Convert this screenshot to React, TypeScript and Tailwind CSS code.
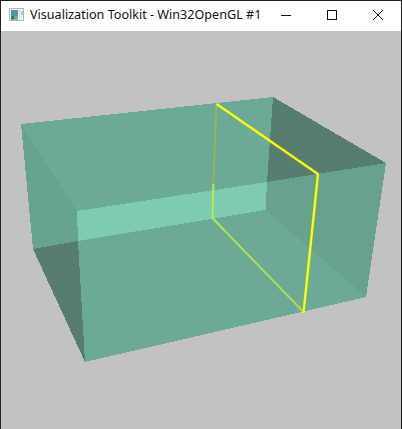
function VtkIcon() {
  return (
    <svg width="16" height="16" viewBox="0 0 16 16" className="shrink-0">
      <rect x="0.5" y="1.5" width="14" height="12" fill="#f1f3f3" stroke="#b4b7b7" />
      <rect x="2" y="3" width="7" height="9.5" fill="#4f9a94" />
      <rect x="2" y="3" width="7" height="3" fill="#5b8fae" />
      <rect x="2" y="9" width="3" height="3.5" fill="#3f6f86" />
      <rect x="5" y="9" width="4" height="3.5" fill="#69b27c" />
      <rect x="10" y="3" width="1" height="9.5" fill="#d5d9d9" />
      <rect x="12" y="4" width="2" height="4" fill="#a9d4c0" />
    </svg>
  );
}

function WindowButtons() {
  return (
    <div className="flex h-full shrink-0">
      <div className="flex w-[46px] items-center justify-center">
        <svg width="10" height="10" viewBox="0 0 10 10">
          <path d="M0 5.5H10" stroke="#111" fill="none" />
        </svg>
      </div>
      <div className="flex w-[46px] items-center justify-center">
        <svg width="10" height="10" viewBox="0 0 10 10">
          <rect x="0.5" y="0.5" width="9" height="9" stroke="#111" fill="none" />
        </svg>
      </div>
      <div className="flex w-[46px] items-center justify-center">
        <svg width="10" height="10" viewBox="0 0 10 10">
          <path d="M0 0L10 10M10 0L0 10" stroke="#111" fill="none" strokeWidth="1" />
        </svg>
      </div>
    </div>
  );
}

function BoxScene() {
  return (
    <svg width="400" height="397" viewBox="1 31 400 397" shapeRendering="crispEdges" className="block">
      {/* silhouette */}
      <polygon points="21,124 273,97 386,163 366,297 85,362 33,249" fill="#6baa96" />
      {/* left face */}
      <polygon points="21,124 77,211 78,241 33,249" fill="#67a490" />
      <polygon points="33,249 78,241 85,362" fill="#577d70" />
      {/* right side */}
      <polygon points="267,182 386,163 366,297 265.5,210" fill="#67a28e" />
      <polygon points="273,97 386,163 267,182" fill="#577d70" />
      {/* inner band */}
      <polygon points="77,211 267,182 265.5,210 78,241" fill="#7dcbb0" />
      {/* cut plane */}
      <g fill="none" shapeRendering="auto">
        <path d="M216.5 104L213.3 184" stroke="#95b650" strokeWidth="2" />
        <path d="M213.3 184L212.5 218L225 231" stroke="#b6e950" strokeWidth="2" />
        <path d="M225 231L303.5 312" stroke="#b8dc50" strokeWidth="1.8" />
        <path d="M216.5 104L318 174L303.5 313" stroke="#ffff00" strokeWidth="2.4" />
      </g>
    </svg>
  );
}

export default function App() {
  return (
    <div className="flex h-[429px] w-[402px] flex-col border-x border-t border-[#222] bg-[#c2c2c2] font-['Noto_Sans',sans-serif]">
      <div className="flex h-[30px] shrink-0 items-center bg-white pb-[2px]">
        <div className="flex min-w-0 flex-1 items-center gap-[5px] pl-2">
          <VtkIcon />
          <span className="whitespace-nowrap text-[12.6px] text-[#111]">Visualization Toolkit - Win32OpenGL #1</span>
        </div>
        <WindowButtons />
      </div>
      <BoxScene />
    </div>
  );
}
